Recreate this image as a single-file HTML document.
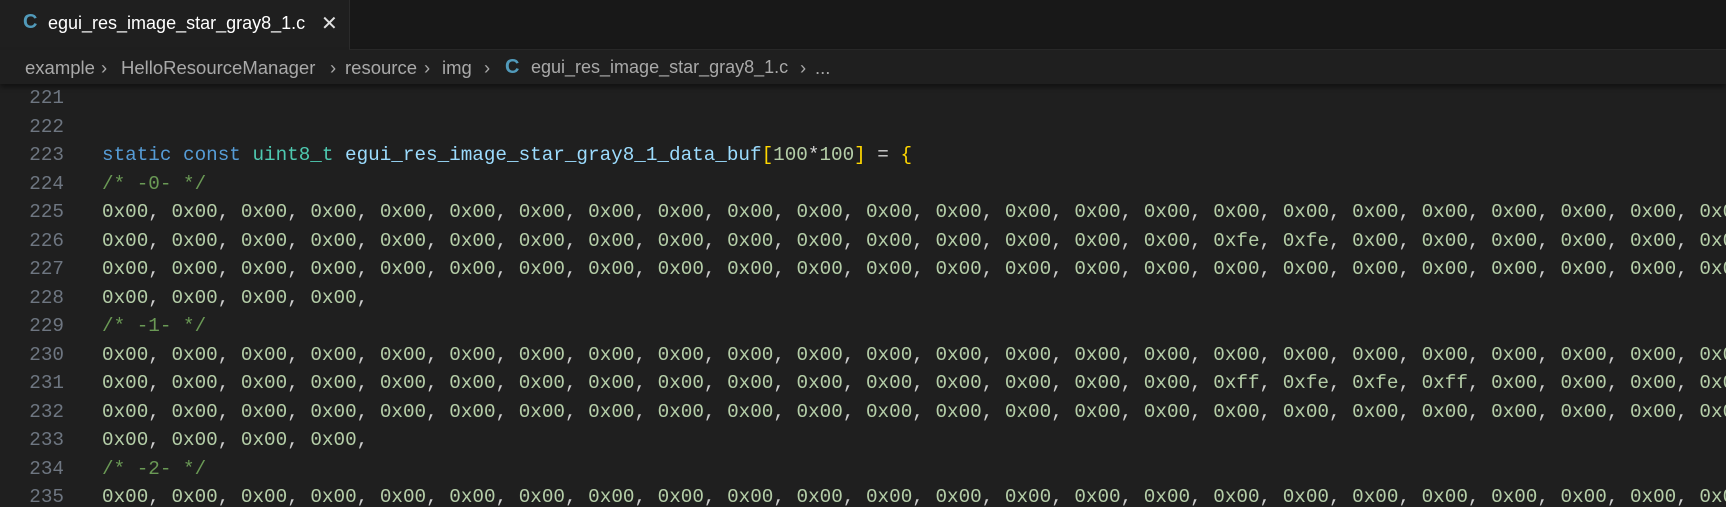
<!DOCTYPE html>
<html><head><meta charset="utf-8"><style>
html,body{margin:0;padding:0;width:1726px;height:507px;overflow:hidden;background:#1f1f1f;}
.tabbar{position:absolute;left:0;top:0;width:1726px;height:50px;background:#181818;border-bottom:1px solid #2b2b2b;box-sizing:border-box;}
.tab{position:absolute;left:0;top:0;width:350px;height:50px;background:#1f1f1f;border-right:1px solid #2b2b2b;box-sizing:border-box;font-family:"Liberation Sans",sans-serif;}
.cic{position:absolute;left:23px;top:11px;color:#519aba;font:bold 20px "Liberation Sans",sans-serif;}
.tt{position:absolute;left:48px;top:13px;color:#ffffff;font-size:18px;}
.x{position:absolute;left:321px;top:11px;color:#e0e0e0;font-size:20px;}
.bc{position:absolute;left:0;top:50px;width:1726px;height:34px;background:#1f1f1f;box-shadow:0 3px 5px rgba(0,0,0,0.45);z-index:2;font-family:"Liberation Sans",sans-serif;font-size:18.5px;color:#a9a9a9;white-space:nowrap;overflow:hidden;}
.bc span{position:absolute;top:7px;}
.code{position:absolute;left:0;top:84px;width:1726px;height:423px;overflow:hidden;font-family:"Liberation Mono",monospace;font-size:19.3px;}
.ln{position:absolute;left:0;width:64px;text-align:right;color:#6e7681;height:28.5px;line-height:28.5px;}
.l{position:absolute;left:102px;white-space:pre;height:28.5px;line-height:28.5px;color:#d4d4d4;}
.n{color:#b5cea8}.k{color:#569cd6}.t{color:#4ec9b0}.v{color:#9cdcfe}.b{color:#ffd700}.c{color:#6a9955}.p{color:#cccccc}
</style></head><body>
<div class="tabbar"><div class="tab"><span class="cic">C</span><span class="tt">egui_res_image_star_gray8_1.c</span><span class="x">✕</span></div></div>
<div class="bc">
<span style="left:25px">example</span><span style="left:101px">›</span>
<span style="left:121px">HelloResourceManager</span><span style="left:330px">›</span>
<span style="left:345px">resource</span><span style="left:424px">›</span>
<span style="left:442px">img</span><span style="left:484px">›</span>
<span style="left:505px;color:#519aba;font-weight:bold;font-size:20px;top:6px">C</span>
<span style="left:531px;font-size:18px">egui_res_image_star_gray8_1.c</span><span style="left:800px">›</span><span style="left:815px">...</span>
</div>
<div class="code" id="code"></div>
<script>
var out='',h=28.5;
function row(i,num,html){out+='<div class="ln" style="top:'+(i*h)+'px">'+num+'</div><div class="l" style="top:'+(i*h)+'px">'+html+'</div>';}
function hexrow(special,n){var s='';for(var i=0;i<n;i++){var v=special[i]||'0x00';s+='<span class="n">'+v+'</span><span class="p">, </span>';}return s;}
row(0,221,'');row(1,222,'');
row(2,223,'<span class="k">static const</span> <span class="t">uint8_t</span> <span class="v">egui_res_image_star_gray8_1_data_buf</span><span class="b">[</span><span class="n">100</span>*<span class="n">100</span><span class="b">]</span> = <span class="b">{</span>');
row(3,224,'<span class="c">/* -0- */</span>');
row(4,225,hexrow({},24));
row(5,226,hexrow({16:'0xfe',17:'0xfe'},24));
row(6,227,hexrow({},24));
row(7,228,hexrow({},4));
row(8,229,'<span class="c">/* -1- */</span>');
row(9,230,hexrow({},24));
row(10,231,hexrow({16:'0xff',17:'0xfe',18:'0xfe',19:'0xff'},24));
row(11,232,hexrow({},24));
row(12,233,hexrow({},4));
row(13,234,'<span class="c">/* -2- */</span>');
row(14,235,hexrow({},24));
document.getElementById('code').innerHTML=out;
</script>
</body></html>
